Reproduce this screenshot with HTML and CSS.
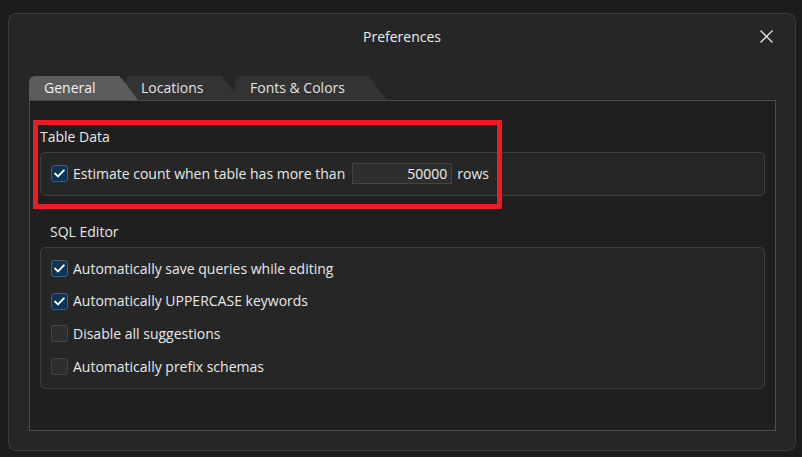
FILE: index.html
```html
<!DOCTYPE html>
<html>
<head>
<meta charset="utf-8">
<link rel="stylesheet" href="styles.css">
</head>
<body>
<div class="window">
  <div class="header">
    <span></span>
    <div class="title">Preferences</div>
    <button class="close" aria-label="Close">
      <svg width="13" height="13" viewBox="0 0 13 13"><path d="M0.5 0.5 L12.5 12.5 M12.5 0.5 L0.5 12.5" stroke="#e6e6e6" stroke-width="1.3" fill="none"/></svg>
    </button>
  </div>
  <div class="tabs">
    <div class="tab tab-general active">General</div>
    <div class="tab tab-locations">Locations</div>
    <div class="tab tab-fonts">Fonts &amp; Colors</div>
  </div>
  <div class="pane">
    <div class="section section-first">
      <div class="group-label label-flush">Table Data</div>
      <div class="group group-table">
        <div class="row">
          <span class="check checked"><svg width="11" height="9" viewBox="0 0 11 9"><path d="M1.2 4.6 L4 7.4 L9.8 1.4" stroke="#fff" stroke-width="2" fill="none" stroke-linecap="round" stroke-linejoin="round"/></svg></span>
          <span class="label">Estimate count when table has more than</span>
          <span class="input">50000</span>
          <span class="label">rows</span>
        </div>
      </div>
    </div>
    <div class="section">
      <div class="group-label">SQL Editor</div>
      <div class="group group-sql">
        <div class="row">
          <span class="check checked"><svg width="11" height="9" viewBox="0 0 11 9"><path d="M1.2 4.6 L4 7.4 L9.8 1.4" stroke="#fff" stroke-width="2" fill="none" stroke-linecap="round" stroke-linejoin="round"/></svg></span>
          <span class="label">Automatically save queries while editing</span>
        </div>
        <div class="row">
          <span class="check checked"><svg width="11" height="9" viewBox="0 0 11 9"><path d="M1.2 4.6 L4 7.4 L9.8 1.4" stroke="#fff" stroke-width="2" fill="none" stroke-linecap="round" stroke-linejoin="round"/></svg></span>
          <span class="label">Automatically UPPERCASE keywords</span>
        </div>
        <div class="row">
          <span class="check"></span>
          <span class="label">Disable all suggestions</span>
        </div>
        <div class="row">
          <span class="check"></span>
          <span class="label">Automatically prefix schemas</span>
        </div>
      </div>
    </div>
    <div class="highlight"></div>
  </div>
</div>
</body>
</html>
```
FILE: styles.css
```css
* { box-sizing: border-box; }
html, body { margin: 0; padding: 0; }
body {
  background: #1c1c1c;
  font-family: "Open Sans", "Noto Sans", sans-serif;
  font-size: 14px;
  color: #e8e8e8;
  width: 802px;
  height: 457px;
  overflow: hidden;
}
.window {
  margin: 13px 0 0 8px;
  width: 788px;
  height: 438px;
  background: #262626;
  border: 1px solid #3b3b3b;
  border-radius: 8px;
  display: flex;
  flex-direction: column;
  padding: 0 19px 19px 20px;
}
.header {
  height: 46px;
  display: grid;
  grid-template-columns: 1fr auto 1fr;
  align-items: center;
  margin: 0 -19px 0 -20px;
  padding: 0 22px;
}
.title {
  font-size: 14px;
  line-height: 20px;
  color: #ececec;
}
.close {
  justify-self: end;
  background: none;
  border: 0;
  padding: 0;
  width: 13px;
  height: 13px;
  display: flex;
  margin-top: -1px;
}
.tabs {
  margin-top: 16px;
  height: 24px;
  display: flex;
  align-items: stretch;
}
.tab {
  position: relative;
  height: 24px;
  line-height: 24px;
  padding-left: 15px;
  background: #333333;
  color: #e2e2e2;
  border-top-left-radius: 6px;
  white-space: nowrap;
}
.tab::after {
  content: "";
  position: absolute;
  top: 0;
  bottom: 0;
  right: -18px;
  width: 40px;
  background: inherit;
  border-top-right-radius: 5px;
  transform: skewX(37deg);
  transform-origin: bottom left;
  z-index: -1;
}
.tab-general {
  width: 91px;
  background: #5c5c5c;
  color: #f2f2f2;
  z-index: 3;
}
.tab-locations {
  width: 96px;
  margin-left: 6px;
  z-index: 1;
}
.tab-fonts {
  width: 134px;
  margin-left: 13px;
  z-index: 2;
}
.pane {
  flex: 1;
  position: relative;
  background: #1f1f1f;
  border: 1px solid #4b4b4b;
  padding: 26px 10px 0 10px;
  z-index: 4;
}
.section-first { margin-bottom: 26px; }
.group-label {
  line-height: 20px;
  margin-bottom: 5px;
  padding-left: 10px;
  color: #e8e8e8;
}
.group-label.label-flush { padding-left: 0; }
.group {
  background: #262626;
  border: 1px solid #3e3e3e;
  border-radius: 5px;
  padding: 10px 10px 11px 10px;
}
.group-sql {
  padding: 10.5px 10px 11px 10px;
  display: flex;
  flex-direction: column;
  gap: 12.7px;
}
.row {
  display: flex;
  align-items: center;
  height: 21px;
  gap: 5px;
}
.group-sql .row { height: 20px; }
.check {
  width: 17px;
  height: 17px;
  border-radius: 3px;
  background: #2e2e2e;
  border: 1px solid #454545;
  display: flex;
  align-items: center;
  justify-content: center;
  flex: none;
}
.check.checked {
  background: #0f3556;
  border-color: #3f6080;
}
.label {
  line-height: 20px;
  color: #e8e8e8;
}
.input {
  width: 100px;
  height: 21px;
  background: #2e2e2e;
  border: 1px solid #444444;
  text-align: right;
  padding: 0 4px;
  line-height: 19px;
  margin-left: 2px;
  color: #eeeeee;
}
.highlight {
  position: absolute;
  left: 3px;
  top: 19px;
  width: 469px;
  height: 89px;
  border: 5px solid #ec1c24;
  pointer-events: none;
}
```
